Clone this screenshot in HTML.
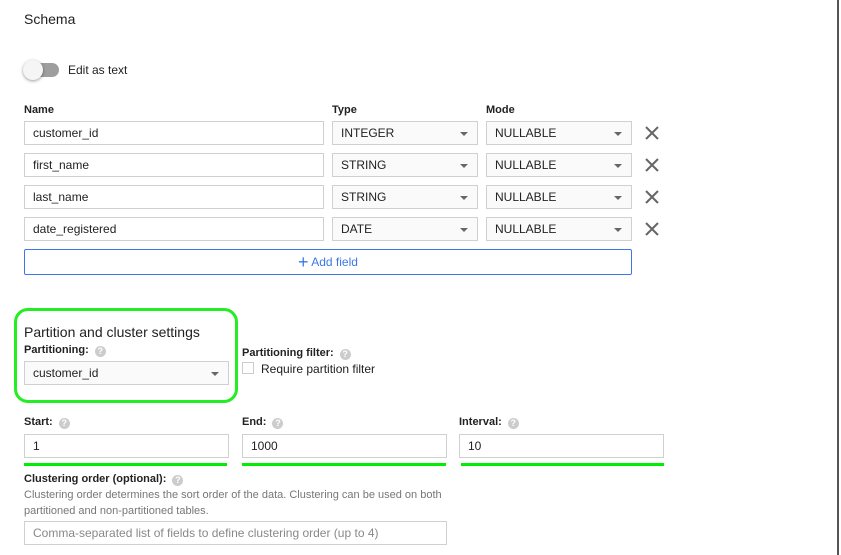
<!DOCTYPE html>
<html><head><meta charset="utf-8"><style>
body{margin:0;width:841px;height:555px;background:#fff;position:relative;overflow:hidden;font-family:"Liberation Sans",Arial,sans-serif;color:#202124}
.a{position:absolute}
.lbl{position:absolute;font-size:11px;font-weight:bold;color:#222}
.in{position:absolute;box-sizing:border-box;border:1px solid #d0d0d0;height:24px;font-size:12px;line-height:22px;padding-left:8px;color:#222;background:#fff}
.sel{background:#fafafa}
.sel:after{content:"";position:absolute;right:9px;top:10px;border-left:4px solid transparent;border-right:4px solid transparent;border-top:4px solid #666}
.q{display:inline-block;width:11px;height:11px;border-radius:50%;background:#ccc;color:#fff;font-size:9px;line-height:11px;text-align:center;font-weight:bold;margin-left:6px;vertical-align:-1px}
.x{position:absolute;width:14px;height:14px}
.g{position:absolute;height:3px;background:#00ee00}
</style></head><body>
<div class="a" style="left:24px;top:11px;font-size:14px">Schema</div>
<div class="a" style="left:28px;top:63px;width:31px;height:14px;border-radius:7px;background:#9e9e9e"></div>
<div class="a" style="left:23px;top:60px;width:20px;height:20px;border-radius:50%;background:#f5f5f5;box-shadow:0 1px 3px rgba(0,0,0,.4)"></div>
<div class="a" style="left:68px;top:63px;font-size:12px">Edit as text</div>

<div class="lbl" style="left:24px;top:104px">Name</div>
<div class="lbl" style="left:332px;top:104px">Type</div>
<div class="lbl" style="left:486px;top:104px">Mode</div>

<div class="in" style="left:24px;top:121px;width:300px">customer_id</div>
<div class="in sel" style="left:332px;top:121px;width:146px">INTEGER</div>
<div class="in sel" style="left:486px;top:121px;width:146px">NULLABLE</div>
<div class="in" style="left:24px;top:153px;width:300px">first_name</div>
<div class="in sel" style="left:332px;top:153px;width:146px">STRING</div>
<div class="in sel" style="left:486px;top:153px;width:146px">NULLABLE</div>
<div class="in" style="left:24px;top:185px;width:300px">last_name</div>
<div class="in sel" style="left:332px;top:185px;width:146px">STRING</div>
<div class="in sel" style="left:486px;top:185px;width:146px">NULLABLE</div>
<div class="in" style="left:24px;top:217px;width:300px">date_registered</div>
<div class="in sel" style="left:332px;top:217px;width:146px">DATE</div>
<div class="in sel" style="left:486px;top:217px;width:146px">NULLABLE</div>

<svg class="x" style="left:645px;top:126px" viewBox="0 0 14 14"><path d="M1 1L13 13M13 1L1 13" stroke="#666" stroke-width="2"/></svg>
<svg class="x" style="left:645px;top:158px" viewBox="0 0 14 14"><path d="M1 1L13 13M13 1L1 13" stroke="#666" stroke-width="2"/></svg>
<svg class="x" style="left:645px;top:190px" viewBox="0 0 14 14"><path d="M1 1L13 13M13 1L1 13" stroke="#666" stroke-width="2"/></svg>
<svg class="x" style="left:645px;top:222px" viewBox="0 0 14 14"><path d="M1 1L13 13M13 1L1 13" stroke="#666" stroke-width="2"/></svg>

<div class="a" style="left:24px;top:249px;width:608px;height:26px;box-sizing:border-box;border:1px solid #3b78e7;border-radius:2px;text-align:center;font-size:12px;line-height:24px;color:#3b78e7"><span style="font-size:18px;vertical-align:-2px;font-weight:300">+</span> Add field</div>

<div class="a" style="left:14px;top:308px;width:224px;height:95px;box-sizing:border-box;border:3px solid #22ee22;border-radius:14px"></div>
<div class="a" style="left:24px;top:324px;font-size:14px">Partition and cluster settings</div>
<div class="lbl" style="left:24px;top:344px">Partitioning:<span class="q">?</span></div>
<div class="in sel" style="left:24px;top:361px;width:205px">customer_id</div>
<div class="lbl" style="left:242px;top:347px">Partitioning filter:<span class="q">?</span></div>
<div class="a" style="left:242px;top:362px;width:10px;height:10px;border:1px solid #ccc"></div>
<div class="a" style="left:261px;top:362px;font-size:12px">Require partition filter</div>

<div class="lbl" style="left:24px;top:416px">Start:<span class="q">?</span></div>
<div class="lbl" style="left:242px;top:416px">End:<span class="q">?</span></div>
<div class="lbl" style="left:459px;top:416px">Interval:<span class="q">?</span></div>
<div class="in" style="left:24px;top:434px;width:205px">1</div>
<div class="in" style="left:242px;top:434px;width:205px">1000</div>
<div class="in" style="left:459px;top:434px;width:205px">10</div>
<div class="g" style="left:24px;top:463px;width:203px"></div>
<div class="g" style="left:242px;top:463px;width:204px"></div>
<div class="g" style="left:461px;top:463px;width:203px"></div>

<div class="lbl" style="left:24px;top:473px">Clustering order (optional):<span class="q">?</span></div>
<div class="a" style="left:24px;top:487px;font-size:11px;line-height:16px;color:#777;width:440px">Clustering order determines the sort order of the data. Clustering can be used on both partitioned and non-partitioned tables.</div>
<div class="in" style="left:24px;top:521px;width:423px;color:#888">Comma-separated list of fields to define clustering order (up to 4)</div>

<div class="a" style="left:837px;top:0;width:2px;height:555px;background:#555"></div>
</body></html>
